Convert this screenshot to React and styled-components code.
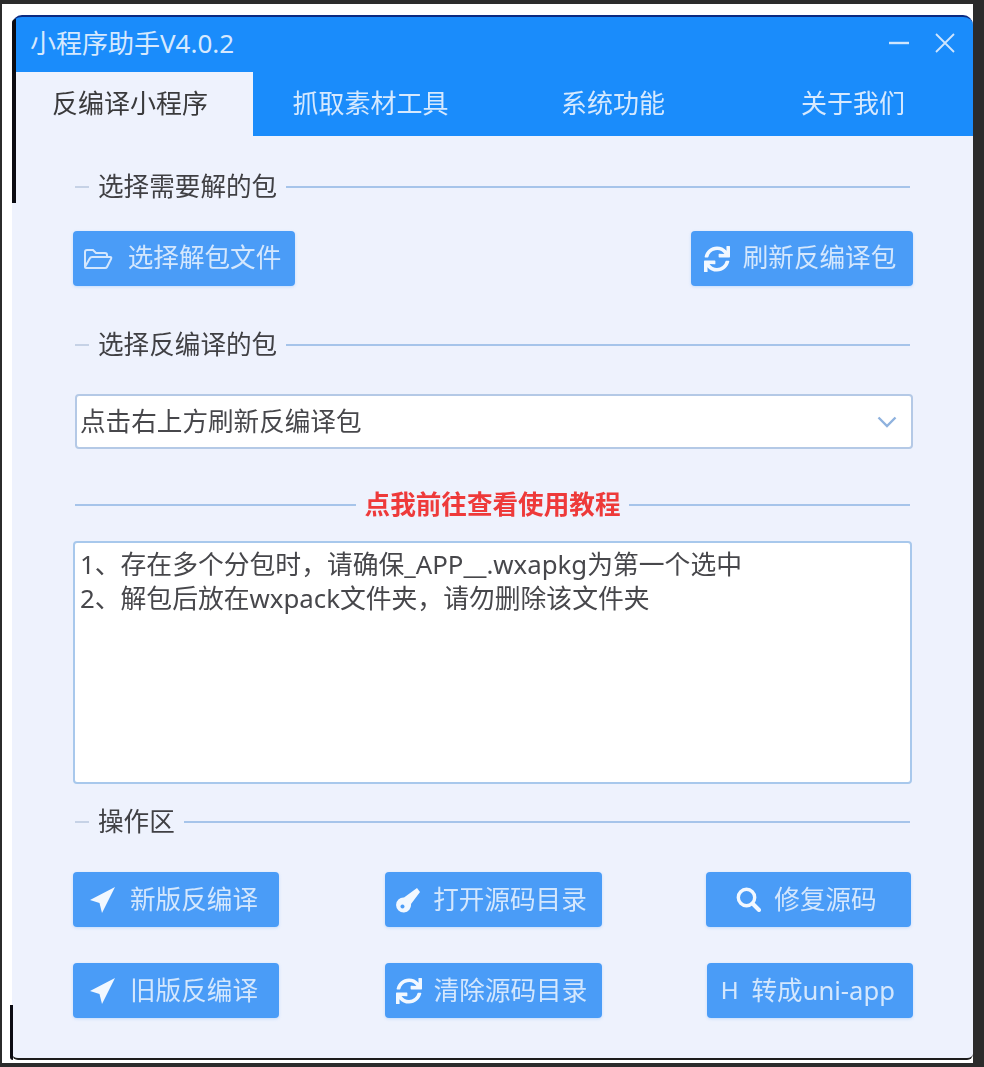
import React from 'react';
import styled, {createGlobalStyle} from 'styled-components';
import {FaSync} from 'react-icons/fa';

const GlobalStyle = createGlobalStyle`
  html, body {
    margin: 0;
    padding: 0;
    background: #2b2b2b;
  }
  body {
    width: 984px;
    height: 1067px;
    overflow: hidden;
    font-family: "Noto Sans", "Noto Sans CJK SC", sans-serif;
  }
`;

const Frame = styled.div`
  box-sizing: border-box;
  width: 971px;
  height: 1059px;
  margin: 4px 0 0 2px;
  padding: 11px 0 0 10px;
  background: #fff;
`;

const Window = styled.div`
  position: relative;
  box-sizing: border-box;
  width: 961px;
  height: 1045px;
  display: flex;
  flex-direction: column;
  background: #eef2fd;
  border-radius: 10px 10px 6px 6px;
  border-bottom: 2px solid #1c1c1c;
  filter: blur(0.7px);
`;

const LeftEdge = styled.div`
  position: absolute;
  left: ${p => p.$left}px;
  top: ${p => p.$top}px;
  width: ${p => p.$width}px;
  height: ${p => p.$height}px;
  background: #0b0b12;
  border-radius: ${p => p.$radius || '0'};
`;

const TitleBar = styled.div`
  box-sizing: border-box;
  height: 57px;
  display: flex;
  align-items: center;
  justify-content: space-between;
  padding: 0 18px 3px 18px;
  background: #1a8cfb;
  border-top: 2px solid #0b2a80;
  border-radius: 10px 10px 0 0;
`;

const AppTitle = styled.div`
  font-size: 26px;
  line-height: 32px;
  color: #d6e9fe;
`;

const WindowControls = styled.div`
  display: flex;
  align-items: center;
  gap: 26px;
  color: #cfe5fd;
`;

const TabBar = styled.div`
  height: 64px;
  display: flex;
  background: #1a8cfb;
`;

const Tab = styled.div`
  width: ${p => p.$width}px;
  display: flex;
  align-items: center;
  justify-content: center;
  padding: 0 ${p => p.$nudge || 0}px 2px 0;
  box-sizing: border-box;
  font-size: 26px;
  line-height: 32px;
  color: ${p => (p.$active ? '#3a3a3c' : '#d6e9fe')};
  background: ${p => (p.$active ? '#eef2fd' : 'transparent')};
`;

const Body = styled.div`
  flex: 1;
  display: flex;
  flex-direction: column;
  padding: 36px 60px 0 61px;
`;

const SectionTitle = styled.div`
  height: 30px;
  line-height: 30px;
  margin-top: ${p => p.$top || 0}px;
  padding: 0 3px 0 2px;
  display: flex;
  align-items: center;
  gap: ${p => p.$gap || 9}px;
  font-size: 25.6px;
  font-weight: ${p => (p.$red ? 700 : 400)};
  color: ${p => (p.$red ? '#ee3a3a' : '#404044')};
`;

const Rule = styled.div`
  flex: ${p => (p.$short ? '0 0 14px' : 1)};
  height: 2px;
  background: ${p => (p.$short ? '#c6d2e6' : '#a6c4ea')};
`;

const SpacedRow = styled.div`
  display: flex;
  justify-content: space-between;
  margin-top: ${p => p.$top}px;
`;

const Button = styled.div`
  box-sizing: border-box;
  width: ${p => p.$width}px;
  height: 55px;
  margin-left: ${p => p.$shift || 0}px;
  padding-right: 4px;
  display: flex;
  align-items: center;
  justify-content: center;
  gap: ${p => p.$gap || 13}px;
  font-size: 25.6px;
  line-height: 32px;
  color: #d4e7fd;
  background: #4a9cf7;
  border-radius: 4px;
  box-shadow: 0 1px 3px rgba(74, 156, 247, 0.25);

  & svg {
    flex: none;
    color: #f2f8ff;
  }
`;

const ButtonLabel = styled.span`
  position: relative;
  top: -1px;
`;

const LetterIcon = styled.span`
  font-family: "Liberation Sans", sans-serif;
  font-size: 24px;
  color: #d4e7fd;
`;

const Select = styled.div`
  box-sizing: border-box;
  height: 55px;
  line-height: 32px;
  margin: 34px 0 0 2px;
  padding: 0 14px 0 3px;
  display: flex;
  align-items: center;
  justify-content: space-between;
  font-size: 25.6px;
  color: #47474b;
  background: #fff;
  border: 2px solid #b4c9e6;
  border-radius: 4px;
`;

const Notes = styled.div`
  box-sizing: border-box;
  width: 839px;
  height: 243px;
  margin-top: 21px;
  padding: 4px 5px;
  font-size: 25.8px;
  line-height: 34px;
  color: #47474b;
  background: #fff;
  border: 2px solid #a8c8ec;
  border-radius: 4px;
`;

const ActionRow = styled.div`
  display: grid;
  grid-template-columns: 312px 321px 207px;
  margin-top: ${p => p.$top}px;

  ${ButtonLabel} {
    top: 0;
  }
`;

const Chevron = () => (
  <svg width="20" height="12" viewBox="0 0 20 12" fill="none" stroke="#8fb2de" strokeWidth="2.4">
    <path d="M1.5 1.5 L10 10 L18.5 1.5" />
  </svg>
);

const Minimize = () => (
  <svg width="20" height="4" viewBox="0 0 20 4" fill="none" stroke="currentColor" strokeWidth="2.4">
    <path d="M0 2 H20" />
  </svg>
);

const Close = () => (
  <svg width="20" height="20" viewBox="0 0 20 20" fill="none" stroke="currentColor" strokeWidth="1.8">
    <path d="M1 1 L19 19 M19 1 L1 19" />
  </svg>
);

const FolderIcon = () => (
  <svg width="30" height="22" viewBox="0 0 30 22" fill="none" stroke="#d4e7fd" strokeWidth="2">
    <path d="M2 19 V4 Q2 2 4 2 H10 L13 5 H22 Q24 5 24 7 V9" />
    <path d="M2 19 L7 10 Q7.5 9 9 9 H27 Q29 9 28 11 L24 19 Q23.5 20 22 20 H3 Q2 20 2 19 Z" />
  </svg>
);

const ArrowIcon = () => (
  <svg width="25" height="26" viewBox="0 0 25 26" fill="currentColor">
    <path d="M25 0 L0 13 L9.5 16 L12 26 Z" />
  </svg>
);

const KeyIcon = () => (
  <svg width="24" height="26" viewBox="0 0 24 26" fill="currentColor">
    <path
      fillRule="evenodd"
      d="M8 10.5 A7.5 7.5 0 1 0 15 17 L24 5 L21 1 Z M6.5 17.5 A2 2 0 1 1 6.49 17.5 Z"
    />
  </svg>
);

const SearchIcon = () => (
  <svg width="25" height="25" viewBox="0 0 25 25" fill="none" stroke="currentColor">
    <circle cx="10.5" cy="10.5" r="8.2" strokeWidth="3.4" />
    <path d="M16.5 16.5 L23 23" strokeWidth="4" strokeLinecap="round" />
  </svg>
);

export default function App() {
  return (
    <>
      <GlobalStyle />
      <Frame>
        <Window>
          <LeftEdge $left={0} $top={4} $width={4} $height={184} $radius="8px 0 0 0" />
          <LeftEdge $left={-2} $top={990} $width={3} $height={55} $radius="0 0 0 6px" />
          <TitleBar>
            <AppTitle>小程序助手V4.0.2</AppTitle>
            <WindowControls>
              <Minimize />
              <Close />
            </WindowControls>
          </TitleBar>
          <TabBar>
            <Tab $width={241} $active $nudge={5}>反编译小程序</Tab>
            <Tab $width={240} $nudge={5}>抓取素材工具</Tab>
            <Tab $width={240}>系统功能</Tab>
            <Tab $width={240}>关于我们</Tab>
          </TabBar>
          <Body>
            <SectionTitle>
              <Rule $short />
              选择需要解的包
              <Rule />
            </SectionTitle>
            <SpacedRow $top={29}>
              <Button $width={222} $gap={15}>
                <FolderIcon />
                <ButtonLabel>选择解包文件</ButtonLabel>
              </Button>
              <Button $width={222}>
                <FaSync size={26} />
                <ButtonLabel>刷新反编译包</ButtonLabel>
              </Button>
            </SpacedRow>
            <SectionTitle $top={44}>
              <Rule $short />
              选择反编译的包
              <Rule />
            </SectionTitle>
            <Select>
              点击右上方刷新反编译包
              <Chevron />
            </Select>
            <SectionTitle $top={41} $red>
              <Rule />
              点我前往查看使用教程
              <Rule />
            </SectionTitle>
            <Notes>
              1、存在多个分包时，请确保_APP__.wxapkg为第一个选中
              <br />
              2、解包后放在wxpack文件夹，请勿删除该文件夹
            </Notes>
            <SectionTitle $top={23}>
              <Rule $short />
              操作区
              <Rule />
            </SectionTitle>
            <ActionRow $top={35}>
              <Button $width={206} $gap={15}>
                <ArrowIcon />
                <ButtonLabel>新版反编译</ButtonLabel>
              </Button>
              <Button $width={217}>
                <KeyIcon />
                <ButtonLabel>打开源码目录</ButtonLabel>
              </Button>
              <Button $width={205}>
                <SearchIcon />
                <ButtonLabel>修复源码</ButtonLabel>
              </Button>
            </ActionRow>
            <ActionRow $top={36}>
              <Button $width={206} $gap={15}>
                <ArrowIcon />
                <ButtonLabel>旧版反编译</ButtonLabel>
              </Button>
              <Button $width={217} $gap={12}>
                <FaSync size={26} />
                <ButtonLabel>清除源码目录</ButtonLabel>
              </Button>
              <Button $width={206} $shift={1} $gap={13}>
                <LetterIcon>H</LetterIcon>
                <ButtonLabel>转成uni-app</ButtonLabel>
              </Button>
            </ActionRow>
          </Body>
        </Window>
      </Frame>
    </>
  );
}
